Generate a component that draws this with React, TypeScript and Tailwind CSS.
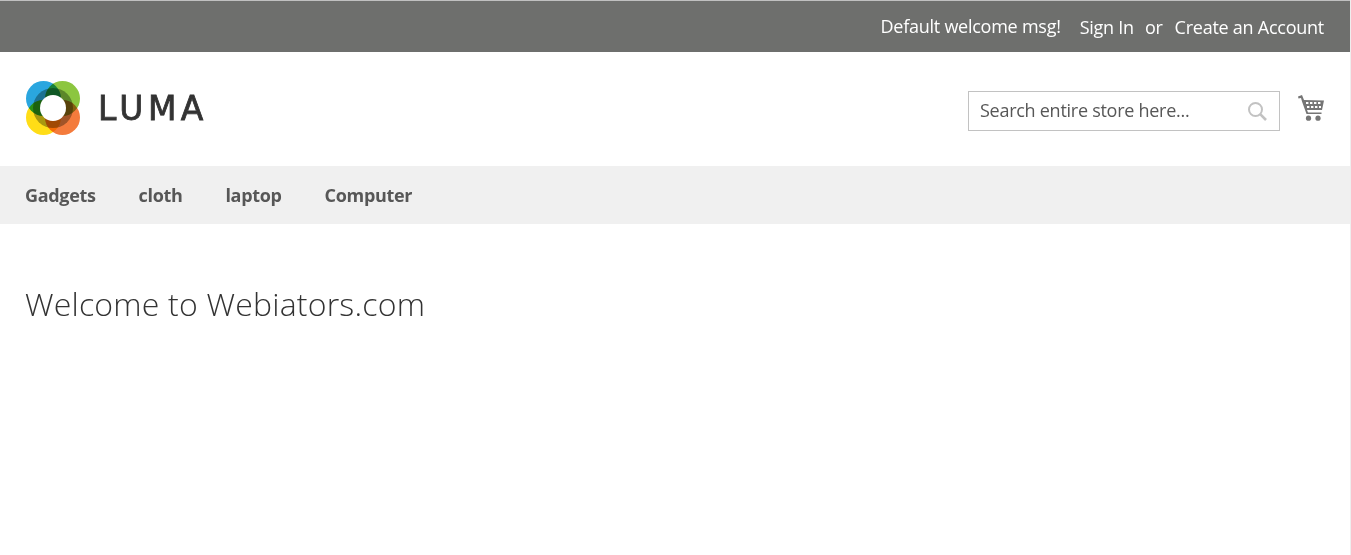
function LumaMark() {
  return (
    <svg width="56" height="56" viewBox="0 0 56 56" className="shrink-0">
      <g style={{ isolation: 'isolate' }}>
        <circle cx="18.5" cy="18.5" r="17.5" fill="#2aa6df" className="mix-blend-multiply" />
        <circle cx="37.5" cy="18.5" r="17.5" fill="#8cc63f" className="mix-blend-multiply" />
        <circle cx="18.5" cy="37.5" r="17.5" fill="#ffdd17" className="mix-blend-multiply" />
        <circle cx="37.5" cy="37.5" r="17.5" fill="#f47b3c" className="mix-blend-multiply" />
        <circle cx="28" cy="28" r="20" fill="#a8aea8" className="mix-blend-multiply" />
      </g>
      <circle cx="28" cy="28" r="13" fill="#ffffff" />
    </svg>
  );
}

function SearchIcon() {
  return (
    <svg width="19" height="19" viewBox="0 0 19 19" fill="none" stroke="#c2c2c2" className="shrink-0">
      <circle cx="7.5" cy="7.5" r="6.5" strokeWidth="2" />
      <path d="M12.2 12.2 L18 18" strokeWidth="2.6" />
    </svg>
  );
}

function CartIcon() {
  return (
    <svg width="26" height="26" viewBox="0 0 26 26" fill="#757575">
      <path d="M0 1.5 L4 0 L6 5 L26 5.5 L24 15 L9 15 L10 17.5 L23.5 17.5 L23.5 19 L8.5 19 L4 6.5 L3 3 L0.5 3.5 Z" />
      <g fill="#ffffff">
        <rect x="8" y="7" width="2.4" height="2" />
        <rect x="12" y="7" width="2.4" height="2" />
        <rect x="16" y="7" width="2.4" height="2" />
        <rect x="20" y="7" width="2.4" height="2" />
        <rect x="9" y="11" width="2.4" height="2" />
        <rect x="13" y="11" width="2.4" height="2" />
        <rect x="17" y="11" width="2.4" height="2" />
        <rect x="21" y="11" width="2" height="2" />
      </g>
      <circle cx="10.5" cy="23.2" r="2.6" />
      <circle cx="20" cy="23.2" r="2.6" />
    </svg>
  );
}

export default function App() {
  return (
    <div className="min-h-[555px] bg-white font-['Open_Sans',sans-serif] border-r border-[#eeeeee]">
      <div className="h-[52px] bg-[#6e6f6d] border-t border-[#c0c0c0] pr-[26px] flex items-center justify-end text-white text-[18px] tracking-[-0.25px]">
        <span className="mr-[19px]">Default welcome msg!</span>
        <a className="mr-[11px] mt-[1px]">Sign In</a>
        <span className="mr-[12px] mt-[1px]">or</span>
        <a className="mt-[1px]">Create an Account</a>
      </div>

      <header className="h-[114px] pl-[25px] pr-[26px] pb-[2px] flex items-center justify-between">
        <div className="flex items-center gap-[17px]">
          <LumaMark />
          <span className="font-['DejaVu_Sans',sans-serif] text-[33px] leading-none tracking-[4.5px] [-webkit-text-stroke:0.8px_#333333] text-[#333333]">LUMA</span>
        </div>
        <div className="flex items-center gap-[18px] mt-[6px]">
          <div className="w-[312px] h-[40px] border border-[#c2c2c2] pl-[11px] pr-[12px] flex items-center justify-between">
            <span className="text-[18px] tracking-[-0.27px] text-[#575757] -mt-[1px]">Search entire store here...</span>
            <SearchIcon />
          </div>
          <div className="-mt-[6px] h-[26px]">
            <CartIcon />
          </div>
        </div>
      </header>

      <nav className="h-[58px] bg-[#f0f0f0] pl-[25px] flex items-center gap-[43px] text-[18px] font-bold tracking-[-0.33px] text-[#575757]">
        <a>Gadgets</a>
        <a>cloth</a>
        <a>laptop</a>
        <a>Computer</a>
      </nav>

      <main className="pl-[25px] pt-[57px]">
        <h1 className="text-[32px] leading-[46px] font-light tracking-[0.2px] text-[#333333]">Welcome to Webiators.com</h1>
      </main>
    </div>
  );
}
